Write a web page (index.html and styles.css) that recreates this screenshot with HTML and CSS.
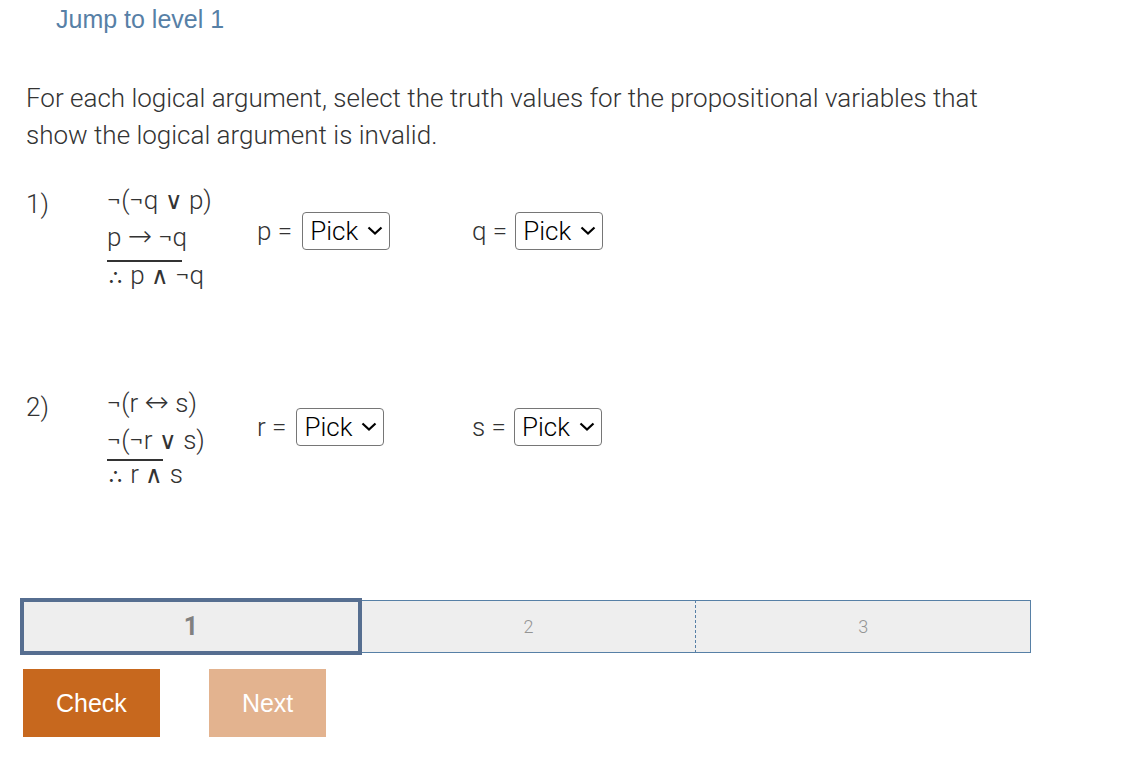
FILE: index.html
```
<!DOCTYPE html>
<html lang="en">
<head>
    <meta charset="UTF-8">
    <meta name="viewport" content="width=device-width, initial-scale=1.0">
    <title>Invalid arguments</title>
    <link rel="stylesheet" href="styles.css">
</head>
<body>
    <main class="activity">
        <a class="jump-link" href="#level-1">Jump to level 1</a>

        <p class="instructions">For each logical argument, select the truth values for the propositional variables that show the logical argument is invalid.</p>

        <div class="question first">
            <span class="number">1)</span>
            <div class="argument">
                <div>¬(¬q <span class="op">∨</span> p)</div>
                <div>p <span class="arrow">→</span> ¬q</div>
                <div class="conclusion"><span class="therefore">∴</span> p <span class="op">∧</span> ¬q</div>
            </div>
            <div class="choice">
                <label for="pick-p">p =</label>
                <div class="select-box">
                    <select id="pick-p">
                        <option>Pick</option>
                        <option>T</option>
                        <option>F</option>
                    </select>
                    <svg class="chevron" viewBox="0 0 16 10"><path d="M1.5 1.5 L8 7.5 L14.5 1.5"/></svg>
                </div>
            </div>
            <div class="choice">
                <label for="pick-q">q =</label>
                <div class="select-box">
                    <select id="pick-q">
                        <option>Pick</option>
                        <option>T</option>
                        <option>F</option>
                    </select>
                    <svg class="chevron" viewBox="0 0 16 10"><path d="M1.5 1.5 L8 7.5 L14.5 1.5"/></svg>
                </div>
            </div>
        </div>

        <div class="question">
            <span class="number">2)</span>
            <div class="argument">
                <div>¬(r <span class="arrow">↔</span> s)</div>
                <div>¬(¬r <span class="op">∨</span> s)</div>
                <div class="conclusion"><span class="therefore">∴</span> r <span class="op">∧</span> s</div>
            </div>
            <div class="choice">
                <label for="pick-r">r =</label>
                <div class="select-box">
                    <select id="pick-r">
                        <option>Pick</option>
                        <option>T</option>
                        <option>F</option>
                    </select>
                    <svg class="chevron" viewBox="0 0 16 10"><path d="M1.5 1.5 L8 7.5 L14.5 1.5"/></svg>
                </div>
            </div>
            <div class="choice">
                <label for="pick-s">s =</label>
                <div class="select-box">
                    <select id="pick-s">
                        <option>Pick</option>
                        <option>T</option>
                        <option>F</option>
                    </select>
                    <svg class="chevron" viewBox="0 0 16 10"><path d="M1.5 1.5 L8 7.5 L14.5 1.5"/></svg>
                </div>
            </div>
        </div>

        <div class="levels">
            <div class="level current">1</div>
            <div class="level">2</div>
            <div class="level">3</div>
        </div>

        <div class="buttons">
            <button type="button">Check</button>
            <button type="button" disabled>Next</button>
        </div>
    </main>
</body>
</html>
```
FILE: styles.css
```
:root {
    --text: #333333;
    --blue: #5780a6;
    --current: #566e90;
    --orange: #c7681e;
}

* {
    box-sizing: border-box;
}

body {
    background: #ffffff;
    color: var(--text);
    font-family: Roboto, "Liberation Sans", sans-serif;
    font-size: 26px;
    font-weight: 300;
    line-height: 37px;
    margin: 0;
}

.activity {
    padding: 1px 107px 44px 20px;
}

.jump-link {
    display: inline-block;
    color: var(--blue);
    font-family: "Liberation Sans", Arial, sans-serif;
    font-size: 25px;
    font-weight: 400;
    text-decoration: none;
    margin-left: 36px;
}

.instructions {
    margin: 42px 0 28px;
    padding-left: 6px;
}

.question {
    display: grid;
    grid-template-columns: 81px 150px 215px auto;
    justify-content: start;
    align-items: start;
    padding-left: 6px;
    height: 203px;
}

.number {
    padding-top: 4px;
}

.conclusion {
    line-height: 26px;
}

.conclusion::before {
    content: "";
    display: block;
    width: 56px;
    height: 2px;
    background: var(--text);
}

.first .conclusion {
    margin-top: 4px;
}

.first .conclusion::before {
    width: 75px;
}

.op,
.arrow,
.therefore {
    line-height: 1;
}

.op {
    font-family: "DejaVu Sans Light", "DejaVu Sans", sans-serif;
    font-size: 24px;
    font-weight: 200;
}

.arrow {
    font-family: "DejaVu Sans", sans-serif;
    font-size: 29px;
    font-weight: 200;
}

.therefore {
    font-family: "Noto Sans CJK JP", sans-serif;
    font-size: 17px;
    font-weight: 700;
}

.choice {
    display: flex;
    align-items: center;
    gap: 10px;
    padding-top: 23px;
}

.choice:last-child {
    gap: 8px;
}

.first .choice {
    padding-top: 30px;
}

.select-box {
    position: relative;
}

.select-box select {
    appearance: none;
    display: block;
    background: #ffffff;
    border: 1px solid #767676;
    border-radius: 4px;
    color: #000000;
    font: inherit;
    height: 38px;
    padding: 0 30px 0 7px;
}

.chevron {
    position: absolute;
    top: 14px;
    right: 7px;
    width: 16px;
    height: 10px;
    fill: none;
    stroke: #000000;
    stroke-width: 2.2;
    pointer-events: none;
}

.levels {
    display: flex;
    align-items: center;
    margin-top: 10px;
}

.level {
    flex: 1;
    height: 53px;
    background: #eeeeee;
    border: solid var(--blue);
    border-width: 1px 0;
    color: #949494;
    font-size: 18px;
    line-height: 51px;
    text-align: center;
}

.level:last-child {
    border-right-width: 1px;
    border-left: 1px dashed var(--blue);
}

.level.current {
    height: 57px;
    border: 4px solid var(--current);
    color: #808080;
    font-size: 25px;
    font-weight: 700;
    line-height: 49px;
}

.buttons {
    display: flex;
    gap: 49px;
    padding: 14px 3px 0;
}

.buttons button {
    background: var(--orange);
    border: none;
    color: #ffffff;
    font-family: "Liberation Sans", Arial, sans-serif;
    font-size: 25px;
    height: 68px;
    padding: 0 33px;
}

.buttons button:disabled {
    background: #e3b38f;
}
```
